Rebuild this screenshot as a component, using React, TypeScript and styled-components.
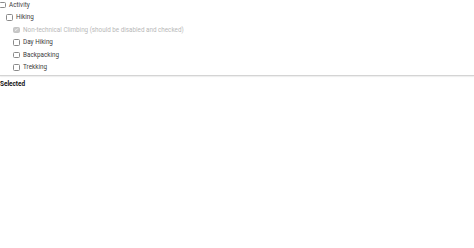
import styled, { createGlobalStyle } from "styled-components";

const GlobalStyle = createGlobalStyle`
  body {
    margin: 0;
    background: #ffffff;
    font-family: Roboto, "Liberation Sans", sans-serif;
    color: #333;
  }
`;

const Page = styled.div`
  display: flex;
  flex-direction: column;
  overflow: hidden;
`;

const Tree = styled.ul`
  list-style: none;
  margin: -1.3px 0 0 -1px;
  padding: 0;
`;

const Row = styled.li<{ level: number }>`
  display: flex;
  align-items: center;
  gap: 3.6px;
  height: 12.5px;
  padding-left: ${(props) => props.level * 7}px;
  font-size: 6.3px;
  color: #3a3a3a;
`;

const Box = styled.span<{ checked?: boolean; disabled?: boolean }>`
  display: inline-flex;
  align-items: center;
  justify-content: center;
  box-sizing: border-box;
  width: 6.5px;
  height: 6.5px;
  border: 0.8px solid ${(props) => (props.disabled ? "#c4c4c4" : "#8a8a8a")};
  border-radius: 1.5px;
  background: ${(props) => (props.checked ? "#c8c8c8" : "#fff")};
  flex: none;
`;

const Label = styled.span<{ disabled?: boolean }>`
  color: ${(props) => (props.disabled ? "#b8b8b8" : "inherit")};
  white-space: nowrap;
`;

const Divider = styled.hr`
  margin: 0.8px 0 0;
  border: none;
  height: 1px;
  background: #d4d4d4;
  box-shadow: 0 1px 1px rgba(0, 0, 0, 0.08);
`;

const Heading = styled.div`
  font-size: 6.4px;
  font-weight: 700;
  padding-top: 4px;
  color: #111;
`;

interface Item {
  label: string;
  level: number;
  checked?: boolean;
  disabled?: boolean;
}

const items: Item[] = [
  { label: "Activity", level: 0 },
  { label: "Hiking", level: 1 },
  {
    label: "Non-technical Climbing (should be disabled and checked)",
    level: 2,
    checked: true,
    disabled: true,
  },
  { label: "Day Hiking", level: 2 },
  { label: "Backpacking", level: 2 },
  { label: "Trekking", level: 2 },
];

function Check() {
  return (
    <svg width="5" height="5" viewBox="0 0 10 10">
      <path
        d="M2 5.2 L4.2 7.3 L8.2 2.8"
        fill="none"
        stroke="#fff"
        strokeWidth="1.8"
      />
    </svg>
  );
}

function App() {
  return (
    <Page>
      <GlobalStyle />
      <Tree>
        {items.map((item) => (
          <Row key={item.label} level={item.level}>
            <Box checked={item.checked} disabled={item.disabled}>
              {item.checked && <Check />}
            </Box>
            <Label disabled={item.disabled}>{item.label}</Label>
          </Row>
        ))}
      </Tree>
      <Divider />
      <Heading>Selected</Heading>
    </Page>
  );
}

export default App;
